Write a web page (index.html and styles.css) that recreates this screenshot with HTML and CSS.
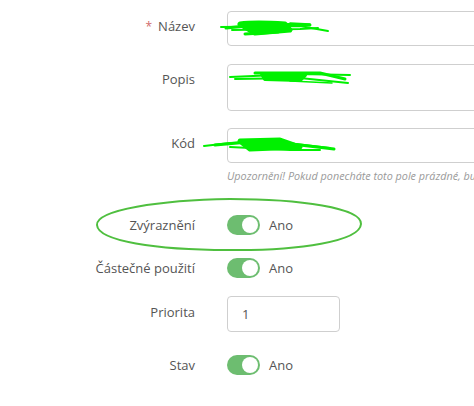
FILE: index.html
```html
<!DOCTYPE html>
<html lang="cs">
<head>
<meta charset="utf-8">
<link rel="stylesheet" href="styles.css">
</head>
<body>
<div class="page">
  <form class="form">
    <div class="row row-name">
      <label class="label label-input"><span class="req">*</span>Název</label>
      <div class="control"><input class="field wide" type="text" value=""></div>
    </div>
    <div class="row row-desc">
      <label class="label label-input">Popis</label>
      <div class="control"><textarea class="field wide area"></textarea></div>
    </div>
    <div class="row row-code">
      <label class="label label-input">Kód</label>
      <div class="control">
        <input class="field wide" type="text" value="">
        <p class="hint">Upozornění! Pokud ponecháte toto pole prázdné, bu</p>
      </div>
    </div>
    <div class="row row-highlight">
      <label class="label label-toggle">Zvýraznění</label>
      <div class="control toggle-wrap"><span class="toggle"><span class="knob"></span></span><span class="toggle-text">Ano</span></div>
    </div>
    <div class="row row-partial">
      <label class="label label-toggle">Částečné použití</label>
      <div class="control toggle-wrap"><span class="toggle"><span class="knob"></span></span><span class="toggle-text">Ano</span></div>
    </div>
    <div class="row row-priority">
      <label class="label label-small">Priorita</label>
      <div class="control"><input class="field small" type="text" value="1"></div>
    </div>
    <div class="row row-state">
      <label class="label label-toggle">Stav</label>
      <div class="control toggle-wrap"><span class="toggle"><span class="knob"></span></span><span class="toggle-text">Ano</span></div>
    </div>
  </form>

  <svg class="marks" width="474" height="406" viewBox="0 0 474 406" xmlns="http://www.w3.org/2000/svg">
    <g fill="none" stroke="#00f000" stroke-linecap="round" stroke-linejoin="round">
      <path d="M221 27 L300 26 L328 31" stroke-width="2"/>
      <path d="M226 28 L268 24 L310 25" stroke-width="3"/>
      <path d="M240 24 C255 22 270 23 285 24 L290 30 L255 33 Z" stroke-width="5" fill="#00f000"/>
      <path d="M232 30 L300 29 L318 28" stroke-width="2"/>
      <path d="M245 34 L278 32" stroke-width="3"/>
      <path d="M290 23 L310 24" stroke-width="1.5"/>
      <path d="M230 77 L300 74 L350 75" stroke-width="2"/>
      <path d="M255 73 L320 73 L345 79" stroke-width="3"/>
      <path d="M235 79 L300 78 L348 83" stroke-width="2"/>
      <path d="M262 74 L305 75 L300 80 L265 79 Z" stroke-width="4" fill="#00f000"/>
      <path d="M290 81 L332 83" stroke-width="1.5"/>
      <path d="M204 146 L230 143 L270 141 L330 148" stroke-width="2"/>
      <path d="M215 145 L260 141 L300 145 L334 149" stroke-width="3"/>
      <path d="M240 141 L280 140 L300 147 L250 149 Z" stroke-width="5" fill="#00f000"/>
      <path d="M230 147 L290 150 L320 150" stroke-width="2"/>
    </g>
    <path class="ellipse" d="M97 225 C96 210 160 200 230 199 C300 199 362 208 361 224 C360 241 300 251 228 250 C156 250 98 241 97 225 Z" fill="none" stroke="#4fbf3f" stroke-width="2"/>
  </svg>
</div>
</body>
</html>
```

FILE: styles.css
```css
html, body {
  margin: 0;
  padding: 0;
  background: #ffffff;
  overflow: hidden;
}

.page {
  position: relative;
  width: 474px;
  height: 406px;
  overflow: hidden;
  font-family: "Open Sans", "DejaVu Sans", sans-serif;
  font-size: 13px;
  color: #555555;
}

.form {
  display: flex;
  flex-direction: column;
  padding-top: 11px;
}

.row {
  display: flex;
  align-items: flex-start;
  gap: 32px;
}

.row-name { margin-bottom: 18px; }
.row-desc { margin-bottom: 17px; }
.row-code { margin-bottom: 32px; }
.row-highlight { margin-bottom: 23px; }
.row-partial { margin-bottom: 18px; }
.row-priority { margin-bottom: 23px; }

.label {
  width: 195px;
  flex: none;
  text-align: right;
  white-space: nowrap;
}

.label-input { line-height: 30px; }
.label-toggle { line-height: 20px; }
.label-small { line-height: 32px; }

.req {
  color: #d06a6a;
  margin-right: 6px;
  font-size: 12px;
}

.control {
  flex: none;
  display: flex;
  flex-direction: column;
}

.field {
  box-sizing: border-box;
  border: 1px solid #cfcfcf;
  border-radius: 4px;
  background: #fff;
  font-family: "Open Sans", "DejaVu Sans", sans-serif;
  font-size: 13px;
  color: #555;
  margin: 0;
  outline: none;
}

.wide {
  width: 300px;
  height: 35px;
  padding: 0 12px;
}

.area {
  height: 47px;
  resize: none;
  display: block;
}

.small {
  width: 113px;
  height: 36px;
  padding: 0 14px;
}

.hint {
  margin: 5px 0 0 0;
  font-size: 10.8px;
  line-height: 15px;
  font-style: italic;
  color: #9a9a9a;
  white-space: nowrap;
}

.toggle-wrap {
  flex-direction: row;
  align-items: center;
  gap: 9px;
  height: 20px;
}

.toggle {
  position: relative;
  display: block;
  width: 33px;
  height: 20px;
  border-radius: 10px;
  background: #6dbd70;
}

.knob {
  position: absolute;
  right: 2px;
  top: 2px;
  width: 16px;
  height: 16px;
  border-radius: 50%;
  background: #ffffff;
}

.toggle-text {
  line-height: 20px;
  color: #555;
}

.marks {
  position: absolute;
  left: 0;
  top: 0;
  pointer-events: none;
}
```
